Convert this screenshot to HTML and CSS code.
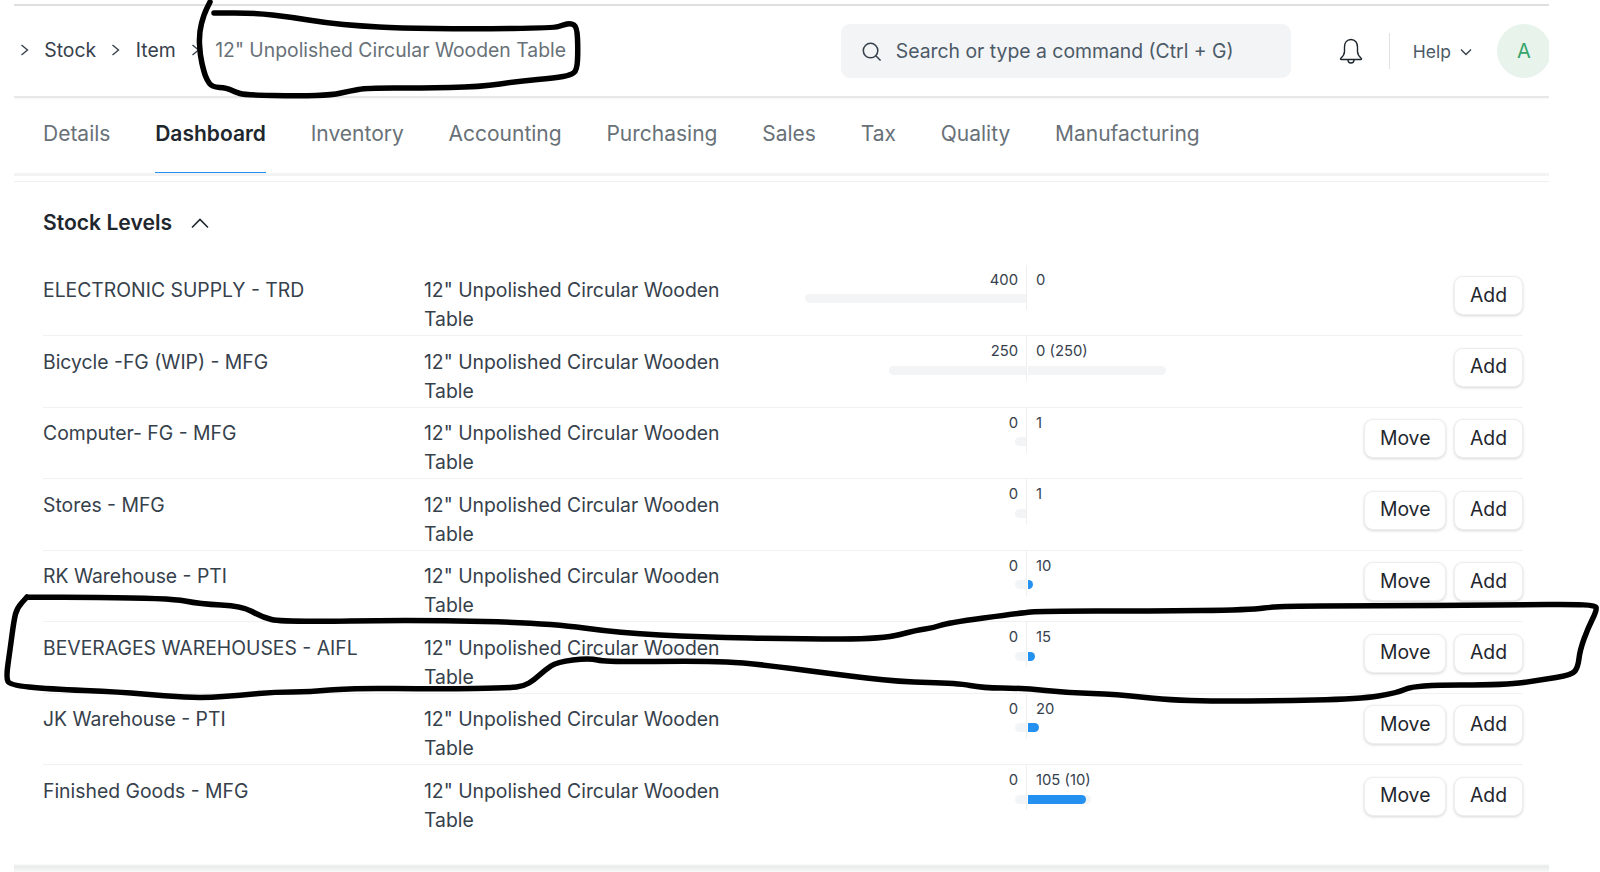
FILE: index.html
```html
<!DOCTYPE html>
<html lang="en">
<head>
<meta charset="utf-8">
<title>12" Unpolished Circular Wooden Table</title>
<link rel="stylesheet" href="styles.css">
</head>
<body>
<div class="page">
  <header class="navbar">
    <nav class="crumbs">
      <svg class="crumb-sep" viewBox="0 0 9 12"><path d="M1.5 1l6 5-6 5"/></svg>
      <span class="crumb">Stock</span>
      <svg class="crumb-sep" viewBox="0 0 9 12"><path d="M1.5 1l6 5-6 5"/></svg>
      <span class="crumb">Item</span>
      <svg class="crumb-sep" viewBox="0 0 9 12"><path d="M1.5 1l6 5-6 5"/></svg>
      <span class="crumb-title">12" Unpolished Circular Wooden Table</span>
    </nav>
    <div class="search">
      <svg class="search-icon" viewBox="0 0 22 22"><circle cx="10" cy="10" r="7.6"/><path d="M15.5 15.5l5 5"/></svg>
      <span>Search or type a command (Ctrl + G)</span>
    </div>
    <svg class="bell" viewBox="0 0 24 26"><path d="M12 1.5c-4.300 0-6.500 3.500-6.500 7.500v4.500c0 2.500-1.300 4.700-3.700 6.800-.6.500-.3 1.200.4 1.200h19.600c.7 0 1-.7.4-1.200-2.400-2.100-3.700-4.300-3.700-6.800V9c0-4-2.200-7.500-6.500-7.500z"/><path d="M9 22c0 1.900 1.300 3 3 3s3-1.100 3-3"/></svg>
    <span class="nav-divider"></span>
    <span class="help">Help</span>
    <svg class="help-chevron" viewBox="0 0 12 8"><path d="M1 1.500l5 5 5-5"/></svg>
    <span class="avatar">A</span>
  </header>

  <div class="tabs">
    <span class="tab">Details</span>
    <span class="tab tab-active">Dashboard</span>
    <span class="tab">Inventory</span>
    <span class="tab">Accounting</span>
    <span class="tab">Purchasing</span>
    <span class="tab">Sales</span>
    <span class="tab">Tax</span>
    <span class="tab">Quality</span>
    <span class="tab">Manufacturing</span>
  </div>
  <div class="tabs-band"></div>

  <section class="stock">
    <div class="section-head">
      <h2 class="section-title">Stock Levels</h2>
      <svg class="section-chevron" viewBox="0 0 18 11"><path d="M1 9.500l8-8 8 8"/></svg>
    </div>
    <div class="rows">

      <div class="row">
        <div class="cell-name">ELECTRONIC SUPPLY - TRD</div>
        <div class="cell-item">12" Unpolished Circular Wooden Table</div>
        <div class="cell-left"><div class="qty">400</div><div class="bar-left" style="width:221px"></div></div>
        <div class="cell-right"><div class="qty">0</div><div class="bar-right" style="width:0"></div></div>
        <div class="actions"><button class="btn">Add</button></div>
      </div>

      <div class="row">
        <div class="cell-name">Bicycle -FG (WIP) - MFG</div>
        <div class="cell-item">12" Unpolished Circular Wooden Table</div>
        <div class="cell-left"><div class="qty">250</div><div class="bar-left" style="width:137px"></div></div>
        <div class="cell-right"><div class="qty">0 (250)</div><div class="bar-right" style="width:138px"></div></div>
        <div class="actions"><button class="btn">Add</button></div>
      </div>

      <div class="row">
        <div class="cell-name">Computer- FG - MFG</div>
        <div class="cell-item">12" Unpolished Circular Wooden Table</div>
        <div class="cell-left"><div class="qty">0</div><div class="bar-left" style="width:11px"></div></div>
        <div class="cell-right"><div class="qty">1</div><div class="bar-right" style="width:0"></div></div>
        <div class="actions"><button class="btn">Move</button><button class="btn">Add</button></div>
      </div>

      <div class="row">
        <div class="cell-name">Stores - MFG</div>
        <div class="cell-item">12" Unpolished Circular Wooden Table</div>
        <div class="cell-left"><div class="qty">0</div><div class="bar-left" style="width:11px"></div></div>
        <div class="cell-right"><div class="qty">1</div><div class="bar-right" style="width:0"></div></div>
        <div class="actions"><button class="btn">Move</button><button class="btn">Add</button></div>
      </div>

      <div class="row">
        <div class="cell-name">RK Warehouse - PTI</div>
        <div class="cell-item">12" Unpolished Circular Wooden Table</div>
        <div class="cell-left"><div class="qty">0</div><div class="bar-left" style="width:11px"></div></div>
        <div class="cell-right"><div class="qty">10</div><div class="bar-right" style="width:4.600px"><div class="bar-fill" style="width:4.600px"></div></div></div>
        <div class="actions"><button class="btn">Move</button><button class="btn">Add</button></div>
      </div>

      <div class="row">
        <div class="cell-name">BEVERAGES WAREHOUSES - AIFL</div>
        <div class="cell-item">12" Unpolished Circular Wooden Table</div>
        <div class="cell-left"><div class="qty">0</div><div class="bar-left" style="width:11px"></div></div>
        <div class="cell-right"><div class="qty">15</div><div class="bar-right" style="width:7px"><div class="bar-fill" style="width:7px"></div></div></div>
        <div class="actions"><button class="btn">Move</button><button class="btn">Add</button></div>
      </div>

      <div class="row">
        <div class="cell-name">JK Warehouse - PTI</div>
        <div class="cell-item">12" Unpolished Circular Wooden Table</div>
        <div class="cell-left"><div class="qty">0</div><div class="bar-left" style="width:11px"></div></div>
        <div class="cell-right"><div class="qty">20</div><div class="bar-right" style="width:10.800px"><div class="bar-fill" style="width:10.800px"></div></div></div>
        <div class="actions"><button class="btn">Move</button><button class="btn">Add</button></div>
      </div>

      <div class="row">
        <div class="cell-name">Finished Goods - MFG</div>
        <div class="cell-item">12" Unpolished Circular Wooden Table</div>
        <div class="cell-left"><div class="qty">0</div><div class="bar-left" style="width:11px"></div></div>
        <div class="cell-right"><div class="qty">105 (10)</div><div class="bar-right" style="width:62.700px"><div class="bar-fill" style="width:58px"></div></div></div>
        <div class="actions"><button class="btn">Move</button><button class="btn">Add</button></div>
      </div>

    </div>
  </section>
  <div class="page-foot"></div>
</div>

<svg class="scribble" viewBox="0 0 1600 872">
  <path d="M210 2 L207 8 Q204 14 201.500 23.500 Q199 33 199.500 44 Q200 55 202 63.500 Q204 72 205.500 76 Q207 80 209.500 83.500 Q212 87 219.500 87.500 Q227 88 231 90 Q235 92 240 93.500 Q245 95 272.500 95.500 Q300 96 316 95.500 Q332 95 341 93 Q350 91 358.500 89.500 Q367 88 393.500 88 Q420 88 450 87.500 Q480 87 500 84 Q520 81 537.500 79.500 Q555 78 563 76.500 Q571 75 574 72.500 Q577 70 577.500 60 Q578 50 577.500 38.500 Q577 27 574 25 Q571 23 567 24 Q563 25 558.500 26.500 Q554 28 512 28.500 Q470 29 434 28.500 Q398 28 379 27 Q360 26 343.500 24.500 Q327 23 308.500 20 Q290 17 272.500 15 Q255 13 234.500 13 L214 13"/>
  <path d="M27 597 L22 602.500 Q17 608 15.500 614 Q14 620 12 635 Q10 650 8 664 Q6 678 8 681.500 Q10 685 29 687 Q48 689 84.500 690.500 Q121 692 143 694 Q165 696 184.500 697 Q204 698 223 696.500 Q242 695 258.500 693.500 Q275 692 292.500 692 Q310 692 329.500 690 Q349 688 394.500 688.500 Q440 689 474.500 688.500 Q509 688 516.500 687 Q524 686 529 683 Q534 680 539.500 675 Q545 670 551 666 Q557 662 573 660 Q589 658 597.500 660 Q606 662 654.500 661.500 Q703 661 726.500 662 Q750 663 791.500 668.500 Q833 674 866.500 678 Q900 682 928.500 682.500 Q957 683 970 685.500 Q983 688 1002 688 Q1021 688 1045.500 690.500 Q1070 693 1092.500 693.500 Q1115 694 1145.500 697.500 Q1176 701 1223 701 Q1270 701 1315 700 Q1360 699 1378.500 696 Q1397 693 1406 689 Q1415 685 1461 685 Q1507 685 1523.500 682.500 Q1540 680 1556 677.500 Q1572 675 1575 671 Q1578 667 1579 658.500 Q1580 650 1584 639 Q1588 628 1592.500 619 Q1597 610 1596 607 Q1595 604 1547.500 604.500 Q1500 605 1434 605.500 Q1368 606 1323 606 Q1278 606 1264 608 Q1250 610 1200 610.500 Q1150 611 1096 611 Q1042 611 1031 612 Q1020 613 983.500 618 Q947 623 940 625.500 Q933 628 925 629 Q917 630 900 634.500 Q883 639 841.500 639 Q800 639 750 638 Q700 637 660 635 Q620 633 584 628 Q548 623 484 621.500 Q420 620 350.500 621 Q281 622 271.500 619.500 Q262 617 252 611.500 Q242 606 221 605 Q200 604 185 601 Q170 598 98.500 597.500 L27 597"/>
</svg>
</body>
</html>
```

FILE: styles.css
```css
* { box-sizing: border-box; }

html, body {
  margin: 0;
  height: 872px;
  overflow: hidden;
  background: #fff;
}

body {
  font-family: Inter, "Liberation Sans", sans-serif;
  font-size: 19.37px;
  color: #1f272e;
  position: relative;
}

.page {
  width: 1535px;
  height: 868px;
  margin: 4px 0 0 14px;
  border-top: 2px solid #dedfe0;
  overflow: hidden;
  display: flex;
  flex-direction: column;
}

/* navbar */
.navbar {
  flex: none;
  height: 92px;
  display: flex;
  align-items: center;
  border-bottom: 2px solid #e6e7e8;
  box-shadow: 0 1px 2px rgba(0, 0, 0, 0.04);
}

.crumbs {
  flex: 1;
  display: flex;
  align-items: center;
  gap: 15.3px;
  padding: 0 0 2px 6px;
}

.crumb { color: #36414c; }
.crumb-title { color: #687178; }

.crumb-sep {
  width: 9px;
  height: 12px;
  fill: none;
  stroke: #36414c;
  stroke-width: 1.4;
}

.search {
  width: 450px;
  height: 54px;
  margin-right: 48px;
  padding-left: 20px;
  display: flex;
  align-items: center;
  gap: 14px;
  border-radius: 9px;
  background: #f3f4f6;
  color: #4c5a67;
}

.search-icon {
  width: 21px;
  height: 21px;
  fill: none;
  stroke: #36414c;
  stroke-width: 1.6;
}

.bell {
  width: 24px;
  height: 26px;
  fill: none;
  stroke: #1f272e;
  stroke-width: 1.4;
}

.nav-divider {
  width: 1px;
  height: 36px;
  margin: 0 23px 0 26px;
  background: #dfe1e3;
}

.help {
  font-size: 17.5px;
  color: #4c5a67;
}

.help-chevron {
  width: 12px;
  height: 8px;
  margin: 2px 25px 0 9px;
  fill: none;
  stroke: #36414c;
  stroke-width: 1.4;
}

.avatar {
  flex: none;
  width: 54px;
  height: 54px;
  margin-right: -2px;
  border-radius: 50%;
  display: flex;
  align-items: center;
  justify-content: center;
  background: #e8f3ec;
  color: #36a46a;
  font-size: 20px;
}

/* tabs */
.tabs {
  flex: none;
  height: 75px;
  display: flex;
  gap: 44.75px;
  padding-left: 29px;
}

.tab {
  height: 75px;
  padding-top: 21px;
  font-size: 21px;
  line-height: 29px;
  color: #687178;
  border-bottom: 1px solid transparent;
}

.tab-active {
  color: #1f272e;
  font-weight: 600;
  border-bottom-color: #2490ef;
}

.tabs-band {
  flex: none;
  height: 9px;
  border-top: 3px solid #f3f3f3;
  border-bottom: 1px solid #f0f0f0;
}

/* stock */
.stock {
  flex: none;
  height: 682px;
  padding: 0 26.5px 0 29px;
}

.section-head {
  height: 81.5px;
  display: flex;
  align-items: flex-start;
  gap: 19px;
  padding-top: 25.5px;
}

.section-title {
  margin: 0;
  font-size: 21.1px;
  line-height: 29px;
  font-weight: 600;
}

.section-chevron {
  width: 18px;
  height: 11px;
  margin-top: 10px;
  fill: none;
  stroke: #1f272e;
  stroke-width: 1.6;
}

.row {
  display: flex;
  height: 71.5px;
  border-top: 1px solid #f1f1f2;
}

.row:first-child { border-top-color: transparent; }

.cell-name,
.cell-item {
  flex: none;
  width: 381px;
  padding-top: 11.5px;
  line-height: 29px;
  color: #36414c;
}

.cell-item { padding-right: 60px; }

.cell-left,
.cell-right {
  height: 45px;
  padding-top: 5px;
}

.cell-left {
  flex: none;
  width: 221px;
  display: flex;
  flex-direction: column;
  align-items: flex-end;
}

.cell-left .qty { padding-right: 8px; }

.cell-right {
  flex: 1;
  border-left: 1px solid #efefef;
}

.cell-right .qty { padding-left: 9px; }

.qty {
  height: 20px;
  font-size: 14.8px;
  line-height: 20px;
  color: #36414c;
}

.bar-left {
  height: 9px;
  margin-top: 4.5px;
  border-radius: 5px 0 0 5px;
  background: #f3f4f6;
}

.bar-right {
  height: 9px;
  margin: 4.5px 0 0 1px;
  border-radius: 0 5px 5px 0;
  background: #f3f4f6;
}

.bar-fill {
  height: 9px;
  border-radius: 0 5px 5px 0;
  background: #2490ef;
}

.actions {
  flex: none;
  display: flex;
  align-items: flex-start;
  gap: 8.5px;
  padding-top: 11.5px;
}

.btn {
  height: 39px;
  padding: 0 14.5px;
  border: 1px solid #edeeef;
  border-radius: 9px;
  background: #fff;
  box-shadow: 0 1px 3px rgba(0, 0, 0, 0.16);
  font: inherit;
  line-height: 1;
  color: #1f272e;
}

.page-foot {
  flex: 1;
  background: linear-gradient(#fdfdfd, #e9eaea 28%, #f7f8f8);
}

/* hand-drawn annotation marks on top of the screenshot */
.scribble {
  position: absolute;
  left: 0;
  top: 0;
  width: 1600px;
  height: 872px;
  fill: none;
  stroke: #000;
  stroke-width: 5.5;
  stroke-linejoin: round;
  stroke-linecap: round;
  pointer-events: none;
}
```
